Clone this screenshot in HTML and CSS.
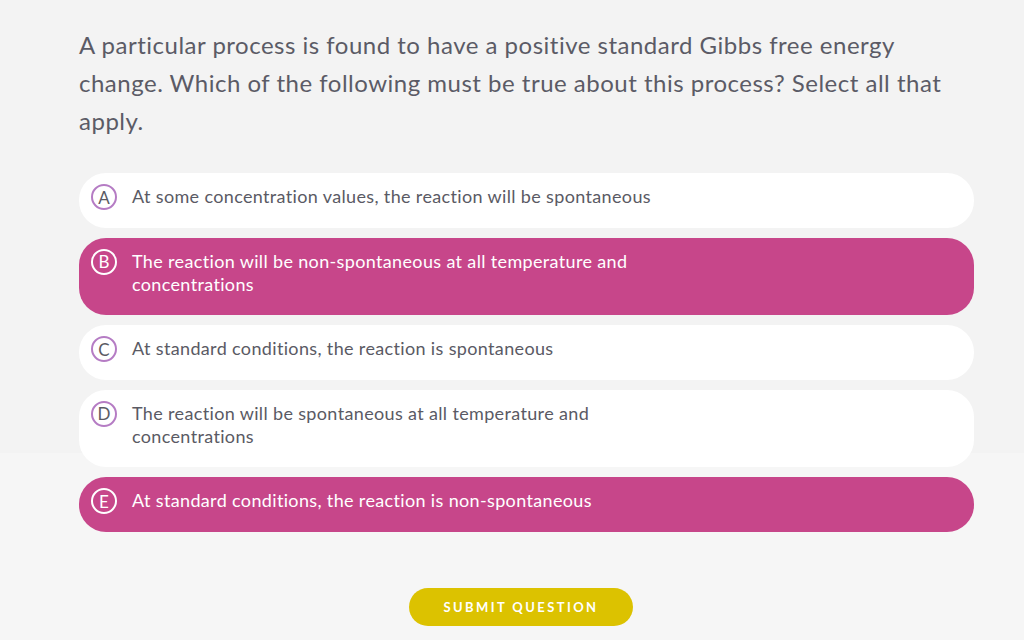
FILE: index.html
```html
<!DOCTYPE html>
<html>
<head>
<meta charset="utf-8">
<link rel="stylesheet" href="styles.css">
</head>
<body>
<div class="page">
  <p class="question">A particular process is found to have a positive standard Gibbs free energy change. Which of the following must be true about this process? Select all that apply.</p>
  <div class="options">
    <div class="option"><span class="badge">A</span><span class="text">At some concentration values, the reaction will be spontaneous</span></div>
    <div class="option selected"><span class="badge">B</span><span class="text">The reaction will be non-spontaneous at all temperature and concentrations</span></div>
    <div class="option"><span class="badge">C</span><span class="text">At standard conditions, the reaction is spontaneous</span></div>
    <div class="option"><span class="badge">D</span><span class="text">The reaction will be spontaneous at all temperature and concentrations</span></div>
    <div class="option selected"><span class="badge">E</span><span class="text">At standard conditions, the reaction is non-spontaneous</span></div>
  </div>
  <div class="actions"><button class="submit">SUBMIT QUESTION</button></div>
</div>
</body>
</html>
```
FILE: styles.css
```css
html, body {
  margin: 0;
  padding: 0;
}
html {
  background: linear-gradient(to bottom, #f3f3f3 0, #f3f3f3 453px, #f6f6f6 453px, #f6f6f6 100%);
  min-height: 100%;
}
body {
  font-family: Lato, "Noto Sans", sans-serif;
  color: #5a5a64;
}
.page {
  width: 895px;
  padding: 26px 0 0 79px;
}
.question {
  margin: 0;
  max-width: 890px;
  font-size: 24px;
  line-height: 38px;
  letter-spacing: 0.5px;
  color: #5b5b66;
}
.options {
  margin-top: 33px;
  display: flex;
  flex-direction: column;
  gap: 10px;
}
.option {
  display: flex;
  align-items: flex-start;
  background: #fff;
  border-radius: 27px;
  padding: 12px 12px 19.5px;
}
.badge {
  flex: none;
  box-sizing: border-box;
  width: 26px;
  height: 26px;
  margin-top: -1px;
  margin-bottom: -3px;
  border: 2px solid #b57cc4;
  border-radius: 50%;
  display: flex;
  align-items: center;
  justify-content: center;
  font-size: 17px;
  line-height: 1;
  color: #5a5a64;
  margin-right: 15px;
}
.text {
  font-size: 18px;
  line-height: 23px;
  letter-spacing: 0.35px;
  max-width: 540px;
}
.option.selected {
  background: #c7468a;
  color: #fff;
}
.option.selected .badge {
  border-color: #fff;
  color: #fff;
}
.actions {
  display: flex;
  justify-content: center;
  margin-top: 56px;
  padding-right: 11px;
}
.submit {
  width: 224px;
  height: 38px;
  border: none;
  border-radius: 19px;
  background: #dcc200;
  color: #fff;
  font-family: Lato, sans-serif;
  font-weight: 700;
  font-size: 13px;
  letter-spacing: 2.4px;
  padding: 0;
}
```
